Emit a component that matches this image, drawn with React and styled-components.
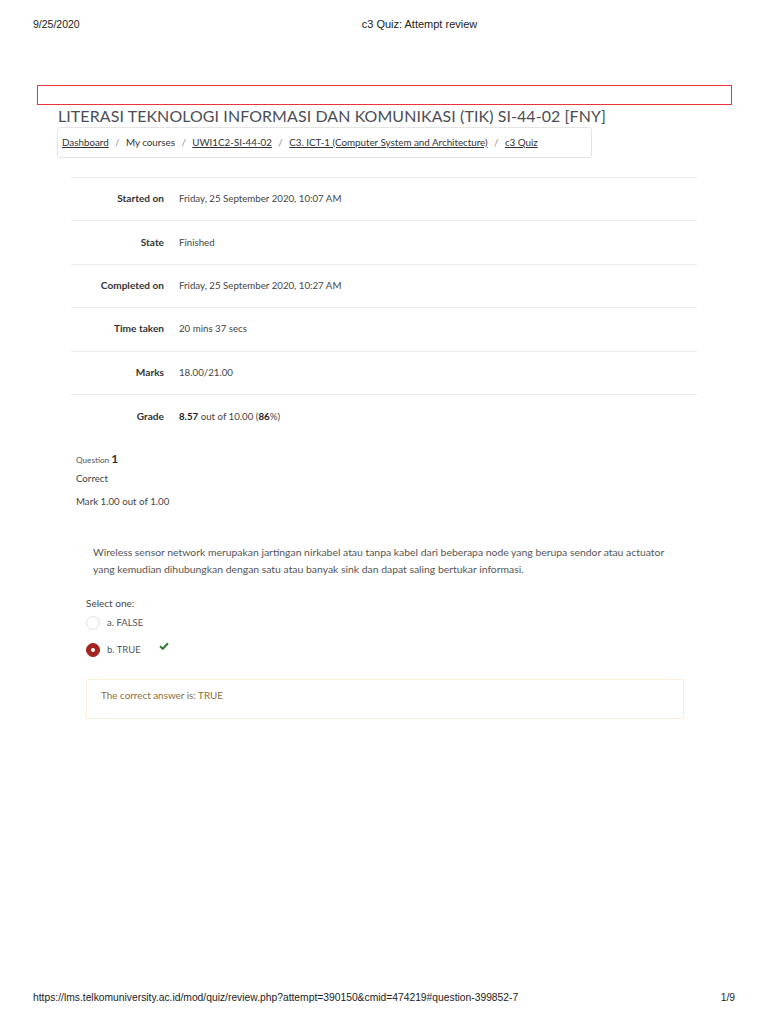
import React from "react";
import styled, { createGlobalStyle } from "styled-components";

const Global = createGlobalStyle`
  html, body { margin: 0; padding: 0; background: #fff; }
  body { font-family: Lato, "Open Sans", sans-serif; }
  * { box-sizing: border-box; }
`;

const Page = styled.div`
  width: 768px;
  height: 1024px;
  display: flex;
  flex-direction: column;
  overflow: hidden;
  background: #fff;
`;

const PrintBar = styled.div`
  display: flex;
  align-items: center;
  padding: ${(p) => (p.$bottom ? "0 33px 0 33px" : "17px 0 0 33px")};
  height: ${(p) => (p.$bottom ? "24px" : "31px")};
  margin-top: ${(p) => (p.$bottom ? "auto" : "0")};
  margin-bottom: ${(p) => (p.$bottom ? "15px" : "0")};
  font-family: "Liberation Sans", Arial, sans-serif;
  font-size: ${(p) => (p.$bottom ? "10.3px" : "10.5px")};
  color: #222;
  justify-content: ${(p) => (p.$bottom ? "space-between" : "flex-start")};
`;

const PrintTitle = styled.span`
  margin-left: 282px;
  font-size: 11px;
`;

const Content = styled.div`
  padding: 54px 36px 0 37px;
  display: flex;
  flex-direction: column;
`;

const RedBox = styled.div`
  width: 695px;
  height: 20px;
  border: 1px solid #e8353b;
`;

const CourseTitle = styled.h1`
  margin: 0;
  padding-left: 21px;
  font-family: Lato, sans-serif;
  font-weight: 400;
  font-size: 15.95px;
  line-height: 22px;
  color: #4a4e54;
  letter-spacing: 0.1px;
`;

const Breadcrumb = styled.nav`
  margin: 0 0 0 20px;
  width: 535px;
  height: 31px;
  border: 1px solid #e4e4e4;
  border-radius: 3px;
  display: flex;
  align-items: center;
  padding: 0 0 2px 4px;
  font-size: 9.8px;
  color: #444;
  gap: 6.4px;
`;

const Crumb = styled.span`
  color: #333;
  text-decoration: ${(p) => (p.$link ? "underline" : "none")};
`;

const Sep = styled.span`
  color: #888;
`;

const SummaryTable = styled.div`
  margin: 19px 0 0 34px;
  width: 626px;
  display: flex;
  flex-direction: column;
  border-top: 1px solid #ececec;
`;

const Row = styled.div`
  display: grid;
  grid-template-columns: 93px 1fr;
  column-gap: 15px;
  height: 43.4px;
  align-items: center;
  padding-bottom: 2px;
  border-bottom: ${(p) => (p.$last ? "none" : "1px solid #ececec")};
  font-size: 9.7px;
`;

const Label = styled.div`
  text-align: right;
  font-weight: 700;
  color: #333;
  font-size: 10.1px;
`;

const Value = styled.div`
  color: #444;
  b { font-weight: 700; color: #222; }
`;

const QuestionInfo = styled.div`
  margin: 13px 0 0 39px;
  display: flex;
  flex-direction: column;
  color: #444;
`;

const QNo = styled.div`
  font-size: 8.2px;
  color: #555;
  height: 16px;
  display: flex;
  align-items: baseline;
  gap: 2px;
  span { font-size: 12px; font-weight: 700; color: #333; }
`;

const InfoLine = styled.div`
  font-size: 9.7px;
  line-height: 23px;
  color: #444;
`;

const QuestionText = styled.p`
  margin: 31px 0 0 56px;
  width: 580px;
  font-size: 10.4px;
  line-height: 17px;
  color: #555;
`;

const Prompt = styled.div`
  margin: 19px 0 0 49px;
  font-size: 10px;
  color: #444;
`;

const Options = styled.div`
  margin: 6px 0 0 49px;
  display: flex;
  flex-direction: column;
  gap: 12px;
`;

const Option = styled.div`
  display: flex;
  align-items: center;
  height: 15px;
  font-size: 9.5px;
  color: #555;
  gap: 7px;
`;

const Radio = styled.span`
  width: 14px;
  height: 14px;
  border-radius: 50%;
  border: 1px solid ${(p) => (p.$checked ? "#a3231f" : "#e2e2e2")};
  background: ${(p) => (p.$checked ? "#a3231f" : "#fff")};
  display: flex;
  align-items: center;
  justify-content: center;
  &::after {
    content: "";
    display: ${(p) => (p.$checked ? "block" : "none")};
    width: 4px;
    height: 4px;
    border-radius: 50%;
    background: #fff;
  }
`;

const Check = styled.svg`
  margin-left: 11px;
  margin-top: -8px;
`;

const Feedback = styled.div`
  margin: 22px 0 0 49px;
  width: 598px;
  height: 40px;
  border: 1px solid #fbeedb;
  border-radius: 2px;
  padding: 9px 14px;
  font-size: 9.9px;
  color: #8c6d3a;
`;

const rows = [
  ["Started on", "Friday, 25 September 2020, 10:07 AM"],
  ["State", "Finished"],
  ["Completed on", "Friday, 25 September 2020, 10:27 AM"],
  ["Time taken", "20 mins 37 secs"],
  ["Marks", "18.00/21.00"],
];

export default function App() {
  return (
    <Page>
      <Global />
      <PrintBar>
        <span>9/25/2020</span>
        <PrintTitle>c3 Quiz: Attempt review</PrintTitle>
      </PrintBar>
      <Content>
        <RedBox />
        <CourseTitle>LITERASI TEKNOLOGI INFORMASI DAN KOMUNIKASI (TIK) SI-44-02 [FNY]</CourseTitle>
        <Breadcrumb>
          <Crumb $link>Dashboard</Crumb>
          <Sep>/</Sep>
          <Crumb>My courses</Crumb>
          <Sep>/</Sep>
          <Crumb $link>UWI1C2-SI-44-02</Crumb>
          <Sep>/</Sep>
          <Crumb $link>C3. ICT-1 (Computer System and Architecture)</Crumb>
          <Sep>/</Sep>
          <Crumb $link>c3 Quiz</Crumb>
        </Breadcrumb>
        <SummaryTable>
          {rows.map(([l, v]) => (
            <Row key={l}>
              <Label>{l}</Label>
              <Value>{v}</Value>
            </Row>
          ))}
          <Row $last>
            <Label>Grade</Label>
            <Value>
              <b>8.57</b> out of 10.00 (<b>86</b>%)
            </Value>
          </Row>
        </SummaryTable>
        <QuestionInfo>
          <QNo>
            Question <span>1</span>
          </QNo>
          <InfoLine>Correct</InfoLine>
          <InfoLine>Mark 1.00 out of 1.00</InfoLine>
        </QuestionInfo>
        <QuestionText>
          Wireless sensor network merupakan jartingan nirkabel atau tanpa kabel dari beberapa node yang berupa sendor atau actuator
          yang kemudian dihubungkan dengan satu atau banyak sink dan dapat saling bertukar informasi.
        </QuestionText>
        <Prompt>Select one:</Prompt>
        <Options>
          <Option>
            <Radio />
            a. FALSE
          </Option>
          <Option>
            <Radio $checked />
            b. TRUE
            <Check width="10" height="8" viewBox="0 0 10 8">
              <path d="M1 4.2 L3.8 6.8 L9 1.2" fill="none" stroke="#2e7d32" strokeWidth="2" />
            </Check>
          </Option>
        </Options>
        <Feedback>The correct answer is: TRUE</Feedback>
      </Content>
      <PrintBar $bottom>
        <span>https://lms.telkomuniversity.ac.id/mod/quiz/review.php?attempt=390150&amp;cmid=474219#question-399852-7</span>
        <span>1/9</span>
      </PrintBar>
    </Page>
  );
}
